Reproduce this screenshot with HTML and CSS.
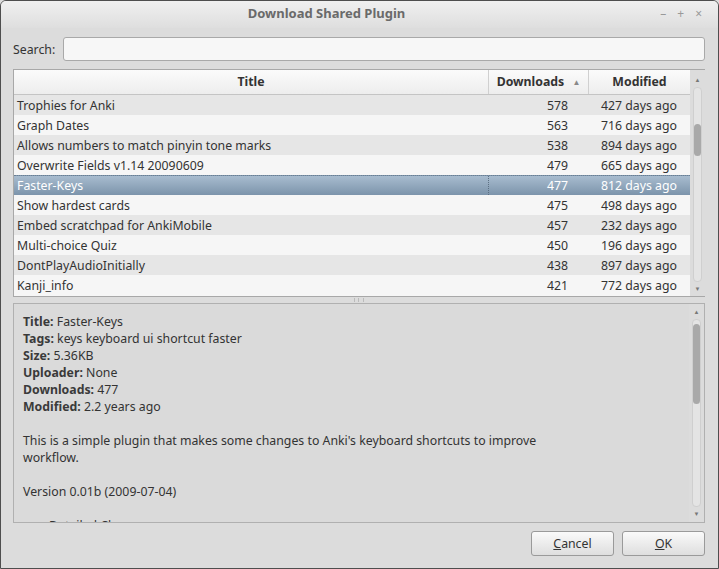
FILE: index.html
```html
<!DOCTYPE html>
<html lang="en">
<head>
    <meta charset="UTF-8">
    <title>Download Shared Plugin</title>
    <link rel="stylesheet" href="styles.css">
</head>
<body>

    <div class="window">
        <div class="titlebar">
            <span class="title">Download Shared Plugin</span>
            <div class="win-buttons">
                <span>&ndash;</span>
                <span>+</span>
                <span>&times;</span>
            </div>
        </div>

        <div class="content">
            <div class="search-row">
                <label for="search">Search:</label>
                <input type="text" id="search" class="search-input">
            </div>

            <div class="table">
                <div class="table-main">
                    <div class="row header">
                        <div class="cell c-title">Title</div>
                        <div class="cell c-down">Downloads <span class="sort">&#9650;</span></div>
                        <div class="cell c-mod">Modified</div>
                    </div>
                    <div class="row"><div class="cell c-title">Trophies for Anki</div><div class="cell c-down">578</div><div class="cell c-mod">427 days ago</div></div>
                    <div class="row"><div class="cell c-title">Graph Dates</div><div class="cell c-down">563</div><div class="cell c-mod">716 days ago</div></div>
                    <div class="row"><div class="cell c-title">Allows numbers to match pinyin tone marks</div><div class="cell c-down">538</div><div class="cell c-mod">894 days ago</div></div>
                    <div class="row"><div class="cell c-title">Overwrite Fields v1.14 20090609</div><div class="cell c-down">479</div><div class="cell c-mod">665 days ago</div></div>
                    <div class="row selected"><div class="cell c-title">Faster-Keys</div><div class="cell c-down">477</div><div class="cell c-mod">812 days ago</div></div>
                    <div class="row"><div class="cell c-title">Show hardest cards</div><div class="cell c-down">475</div><div class="cell c-mod">498 days ago</div></div>
                    <div class="row"><div class="cell c-title">Embed scratchpad for AnkiMobile</div><div class="cell c-down">457</div><div class="cell c-mod">232 days ago</div></div>
                    <div class="row"><div class="cell c-title">Multi-choice Quiz</div><div class="cell c-down">450</div><div class="cell c-mod">196 days ago</div></div>
                    <div class="row"><div class="cell c-title">DontPlayAudioInitially</div><div class="cell c-down">438</div><div class="cell c-mod">897 days ago</div></div>
                    <div class="row"><div class="cell c-title">Kanji_info</div><div class="cell c-down">421</div><div class="cell c-mod">772 days ago</div></div>
                </div>
                <div class="vscroll table-scroll">
                    <span class="arrow">&#9650;</span>
                    <div class="track"><div class="thumb"></div></div>
                    <span class="arrow">&#9660;</span>
                </div>
            </div>

            <div class="splitter"><span class="grip"></span></div>

            <div class="details">
                <div class="details-text">
                    <div><b>Title:</b> Faster-Keys</div>
                    <div><b>Tags:</b> keys keyboard ui shortcut faster</div>
                    <div><b>Size:</b> 5.36KB</div>
                    <div><b>Uploader:</b> None</div>
                    <div><b>Downloads:</b> 477</div>
                    <div><b>Modified:</b> 2.2 years ago</div>
                    <p>This is a simple plugin that makes some changes to Anki's keyboard shortcuts to improve<br>workflow.</p>
                    <p>Version 0.01b (2009-07-04)</p>
                    <ul>
                        <li>Detailed Changes</li>
                    </ul>
                </div>
                <div class="vscroll details-scroll">
                    <span class="arrow">&#9650;</span>
                    <div class="track"><div class="thumb"></div></div>
                    <span class="arrow">&#9660;</span>
                </div>
            </div>

            <div class="buttons">
                <button class="btn"><u>C</u>ancel</button>
                <button class="btn"><u>O</u>K</button>
            </div>
        </div>
    </div>

</body>
</html>
```

FILE: styles.css
```css
body {
    margin: 0;
    padding: 0;
    background-color: #dcdcdc;
    font-family: 'Noto Sans', 'Open Sans', sans-serif;
    font-size: 12.3px;
    color: #333;
}

.window {
    width: 719px;
    height: 569px;
    box-sizing: border-box;
    border: 1px solid #4e4e4e;
    border-radius: 6px 6px 0 0;
    background-color: #dcdcdc;
    display: flex;
    flex-direction: column;
    overflow: hidden;
}

.titlebar {
    height: 27px;
    flex-shrink: 0;
    background: linear-gradient(#f0f0f0, #dedede);
    display: flex;
    align-items: center;
    justify-content: center;
    padding-right: 66px;
    position: relative;
}

.title {
    font-weight: bold;
    font-size: 13px;
    color: #6a6a6a;
    margin-top: -3px;
}

.win-buttons {
    position: absolute;
    right: 16px;
    top: 4px;
    display: flex;
    gap: 11px;
    color: #999;
    font-size: 12px;
}

.content {
    flex: 1;
    display: flex;
    flex-direction: column;
    padding: 9px 13px 12px 12px;
}

.search-row {
    display: flex;
    align-items: center;
    gap: 8px;
}

.search-row label {
    color: #333;
}

.search-input {
    flex: 1;
    height: 24px;
    box-sizing: border-box;
    border: 1px solid #a9a9a9;
    border-radius: 3px;
    background-color: #f7f7f7;
    margin: 0;
}

.table {
    margin-top: 8px;
    display: flex;
    border: 1px solid #a8a8a8;
    background-color: #f6f6f6;
    height: 228px;
    box-sizing: border-box;
}

.table-main {
    flex: 1;
    display: flex;
    flex-direction: column;
}

.row {
    display: flex;
    height: 20px;
    align-items: center;
    background-color: #f6f6f6;
}

.row:nth-child(even) {
    background-color: #e6e6e6;
}

.row.header {
    height: 24px;
    flex-shrink: 0;
    background: linear-gradient(#fbfbfb, #ededed);
    border-bottom: 1px solid #c4c4c4;
    font-weight: bold;
    color: #333;
}

.row.header .cell {
    text-align: center;
    height: 100%;
    line-height: 24px;
    box-sizing: border-box;
    padding: 0;
}

.row.header .c-title,
.row.header .c-down {
    border-right: 1px solid #d0d0d0;
}

.cell {
    white-space: nowrap;
    overflow: hidden;
    box-sizing: border-box;
}

.c-title {
    width: 475px;
    padding-left: 3px;
}

.c-down {
    width: 100px;
    text-align: right;
    padding-right: 21px;
}

.c-mod {
    width: 101px;
    text-align: right;
    padding-right: 13px;
}

.sort {
    font-size: 8px;
    color: #888;
    margin-left: 5px;
    vertical-align: 1px;
}

.row.selected {
    background: linear-gradient(#a8bccf, #7c94ab);
    color: #fff;
    border-top: 1px dotted #6a7f94;
    box-sizing: border-box;
}

.row.selected .c-title {
    border-right: 1px dotted #5c6f82;
    height: 100%;
    display: flex;
    align-items: center;
}

.vscroll {
    width: 15px;
    flex-shrink: 0;
    display: flex;
    flex-direction: column;
    align-items: center;
    background-color: #dcdcdc;
}

.arrow {
    font-size: 6px;
    color: #777;
    height: 10px;
    line-height: 10px;
}

.track {
    flex: 1;
    width: 7px;
    border-radius: 4px;
    background-color: #e4e4e4;
    border: 1px solid #cfcfcf;
    margin: 2px 0;
    position: relative;
}

.thumb {
    position: absolute;
    left: 0;
    right: 0;
    border-radius: 4px;
    background-color: #a9a9a9;
}

.table-scroll {
    padding-top: 5px;
    padding-bottom: 2px;
}

.table-scroll .thumb {
    top: 36px;
    height: 32px;
}

.details-scroll {
    padding-top: 3px;
    padding-bottom: 3px;
}

.details-scroll .thumb {
    top: 4px;
    height: 80px;
}

.splitter {
    height: 6px;
    flex-shrink: 0;
    display: flex;
    justify-content: center;
    align-items: center;
}

.grip {
    width: 8px;
    height: 4px;
    border-left: 1px solid #bbb;
    border-right: 1px solid #bbb;
    background: linear-gradient(90deg, transparent 3px, #bbb 3px, #bbb 4px, transparent 4px);
}

.details {
    height: 220px;
    display: flex;
    border: 1px solid #b0b0b0;
    box-sizing: border-box;
    background-color: #dadada;
    overflow: hidden;
}

.details-text {
    flex: 1;
    padding: 9px 9px 0 9px;
    line-height: 17px;
    color: #333;
    overflow: hidden;
}

.details-text b {
    color: #3a3a3a;
}

.details-text p {
    margin: 17px 0 0 0;
}

.details-text ul {
    margin: 17px 0 0 0;
    padding-left: 26px;
}

.buttons {
    margin-top: 8px;
    display: flex;
    justify-content: flex-end;
    gap: 8px;
}

.btn {
    width: 83px;
    height: 25px;
    border: 1px solid #9a9a9a;
    border-radius: 3px;
    background: linear-gradient(#fafafa, #dedede);
    font-family: 'Noto Sans', 'Open Sans', sans-serif;
    font-size: 12.3px;
    color: #333;
    padding: 0;
}
```
